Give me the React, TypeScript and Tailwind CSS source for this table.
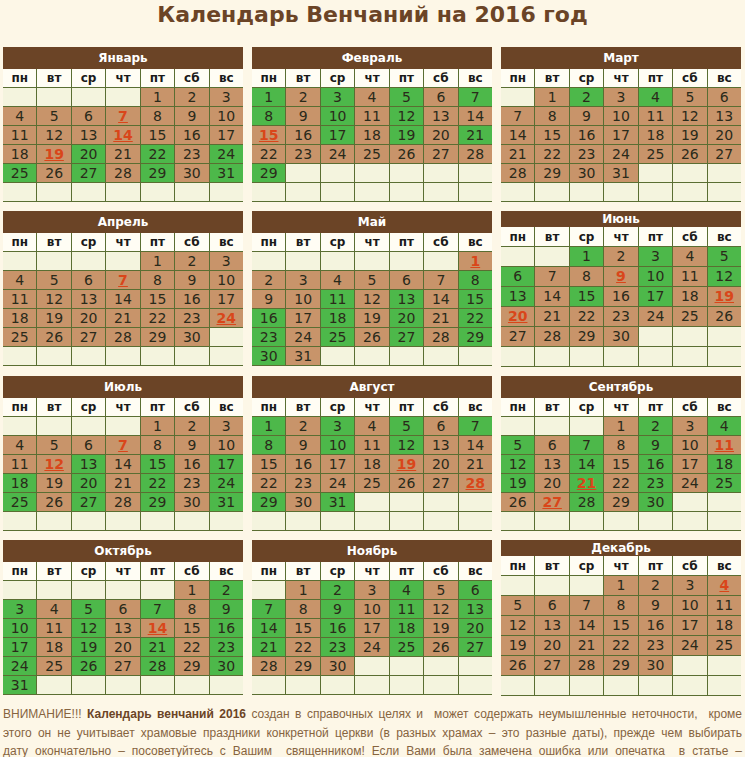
import React from 'react';

type Month = {
  name: string;
  start: number;
  days: number;
  green: number[];
  red: number[];
  tall?: boolean;
};

const months: Month[] = [
  { name: 'Январь', start: 4, days: 31, green: [20, 22, 24, 25, 27, 29, 31], red: [7, 14, 19] },
  { name: 'Февраль', start: 0, days: 29, green: [1, 3, 5, 7, 8, 10, 12, 17, 19, 21, 29], red: [15] },
  { name: 'Март', start: 1, days: 31, green: [2, 4], red: [] },
  { name: 'Апрель', start: 4, days: 30, green: [], red: [7, 24] },
  { name: 'Май', start: 6, days: 31, green: [8, 11, 13, 15, 16, 18, 20, 22, 23, 25, 27, 29, 30], red: [1] },
  { name: 'Июнь', start: 2, days: 30, green: [1, 3, 5, 6, 10, 12, 13, 15, 17], red: [9, 19, 20], tall: true },
  { name: 'Июль', start: 4, days: 31, green: [13, 15, 17, 18, 20, 22, 24, 25, 27, 29, 31], red: [7, 12] },
  { name: 'Август', start: 0, days: 31, green: [1, 3, 5, 7, 8, 10, 12, 29, 31], red: [19, 28] },
  { name: 'Сентябрь', start: 3, days: 30, green: [2, 4, 5, 7, 9, 12, 14, 16, 18, 19, 21, 23, 25, 28, 30], red: [11, 21, 27] },
  { name: 'Октябрь', start: 5, days: 31, green: [2, 3, 5, 7, 9, 10, 12, 16, 17, 19, 21, 23, 24, 26, 28, 30, 31], red: [14] },
  { name: 'Ноябрь', start: 1, days: 30, green: [2, 4, 6, 7, 9, 11, 13, 14, 16, 18, 20, 21, 23, 25, 27], red: [] },
  // the source table stops at the 30th in December
  { name: 'Декабрь', start: 3, days: 30, green: [], red: [4], tall: true },
];

const weekdays = ['пн', 'вт', 'ср', 'чт', 'пт', 'сб', 'вс'];

const MonthTable: React.FC<{ m: Month }> = ({ m }) => {
  const cells = Array.from({ length: 42 }, (_, i) => i - m.start + 1);
  return (
    <div className="w-[240px]">
      <div
        className={
          m.tall
            ? 'h-[16px] bg-[#6b4426] text-white font-bold text-[12px] leading-[16px] text-center'
            : 'h-[22px] bg-[#6b4426] text-white font-bold text-[12px] leading-[22px] text-center'
        }
      >
        {m.name}
      </div>
      <div className="grid grid-cols-7 gap-px bg-[#5a6e32] pb-px">
        {weekdays.map((d) => (
          <div
            key={d}
            className={
              m.tall
                ? 'h-[19px] bg-[#fffdf4] text-[12px] font-bold text-[#1a1a1a] flex items-center justify-center'
                : 'h-[18px] bg-[#fffdf4] text-[12px] font-bold text-[#1a1a1a] flex items-center justify-center'
            }
          >
            {d}
          </div>
        ))}
        {cells.map((day, i) => {
          const inMonth = day >= 1 && day <= m.days;
          const green = inMonth && m.green.includes(day);
          const red = inMonth && m.red.includes(day);
          const bg = !inMonth ? 'bg-[#f4f4de]' : green ? 'bg-[#4db84a]' : 'bg-[#c8946a]';
          return (
            <div
              key={i}
              className={`${m.tall ? 'h-[19px]' : 'h-[18px]'} ${bg} flex items-center justify-center text-[14px]`}
            >
              {inMonth &&
                (red ? (
                  <span className="font-bold text-[#d9461a] underline">{day}</span>
                ) : (
                  <span className="text-[#2a2a1a]">{day}</span>
                ))}
            </div>
          );
        })}
      </div>
    </div>
  );
};

export default function App() {
  return (
    <div className="min-h-screen bg-[#fdf7e7] font-['DejaVu_Sans',sans-serif]">
      <h1 className="h-[47px] pt-[1px] text-center text-[22px] leading-[28px] font-bold text-[#6b4426]">
        Календарь Венчаний на 2016 год
      </h1>
      <div className="pl-[3px] grid grid-cols-[240px_240px_240px] gap-x-[9px] gap-y-[9px]">
        {months.map((m) => (
          <MonthTable key={m.name} m={m} />
        ))}
      </div>
      <div className="mt-[9px] px-[3px] font-['Liberation_Sans',sans-serif] text-[12px] leading-[18.5px] text-[#86643f]">
        <div className="text-justify [text-align-last:justify] whitespace-nowrap">
          ВНИМАНИЕ!!! <b className="text-[#6b4426]">Календарь венчаний 2016</b> создан в справочных целях и&nbsp; может содержать неумышленные неточности,&nbsp; кроме
        </div>
        <div className="text-justify [text-align-last:justify] whitespace-nowrap">
          этого он не учитывает храмовые праздники конкретной церкви (в разных храмах – это разные даты), прежде чем выбирать
        </div>
        <div className="text-justify [text-align-last:justify] whitespace-nowrap">
          дату окончательно – посоветуйтесь с Вашим&nbsp; священником! Если Вами была замечена ошибка или опечатка&nbsp; в статье –
        </div>
      </div>
    </div>
  );
}
